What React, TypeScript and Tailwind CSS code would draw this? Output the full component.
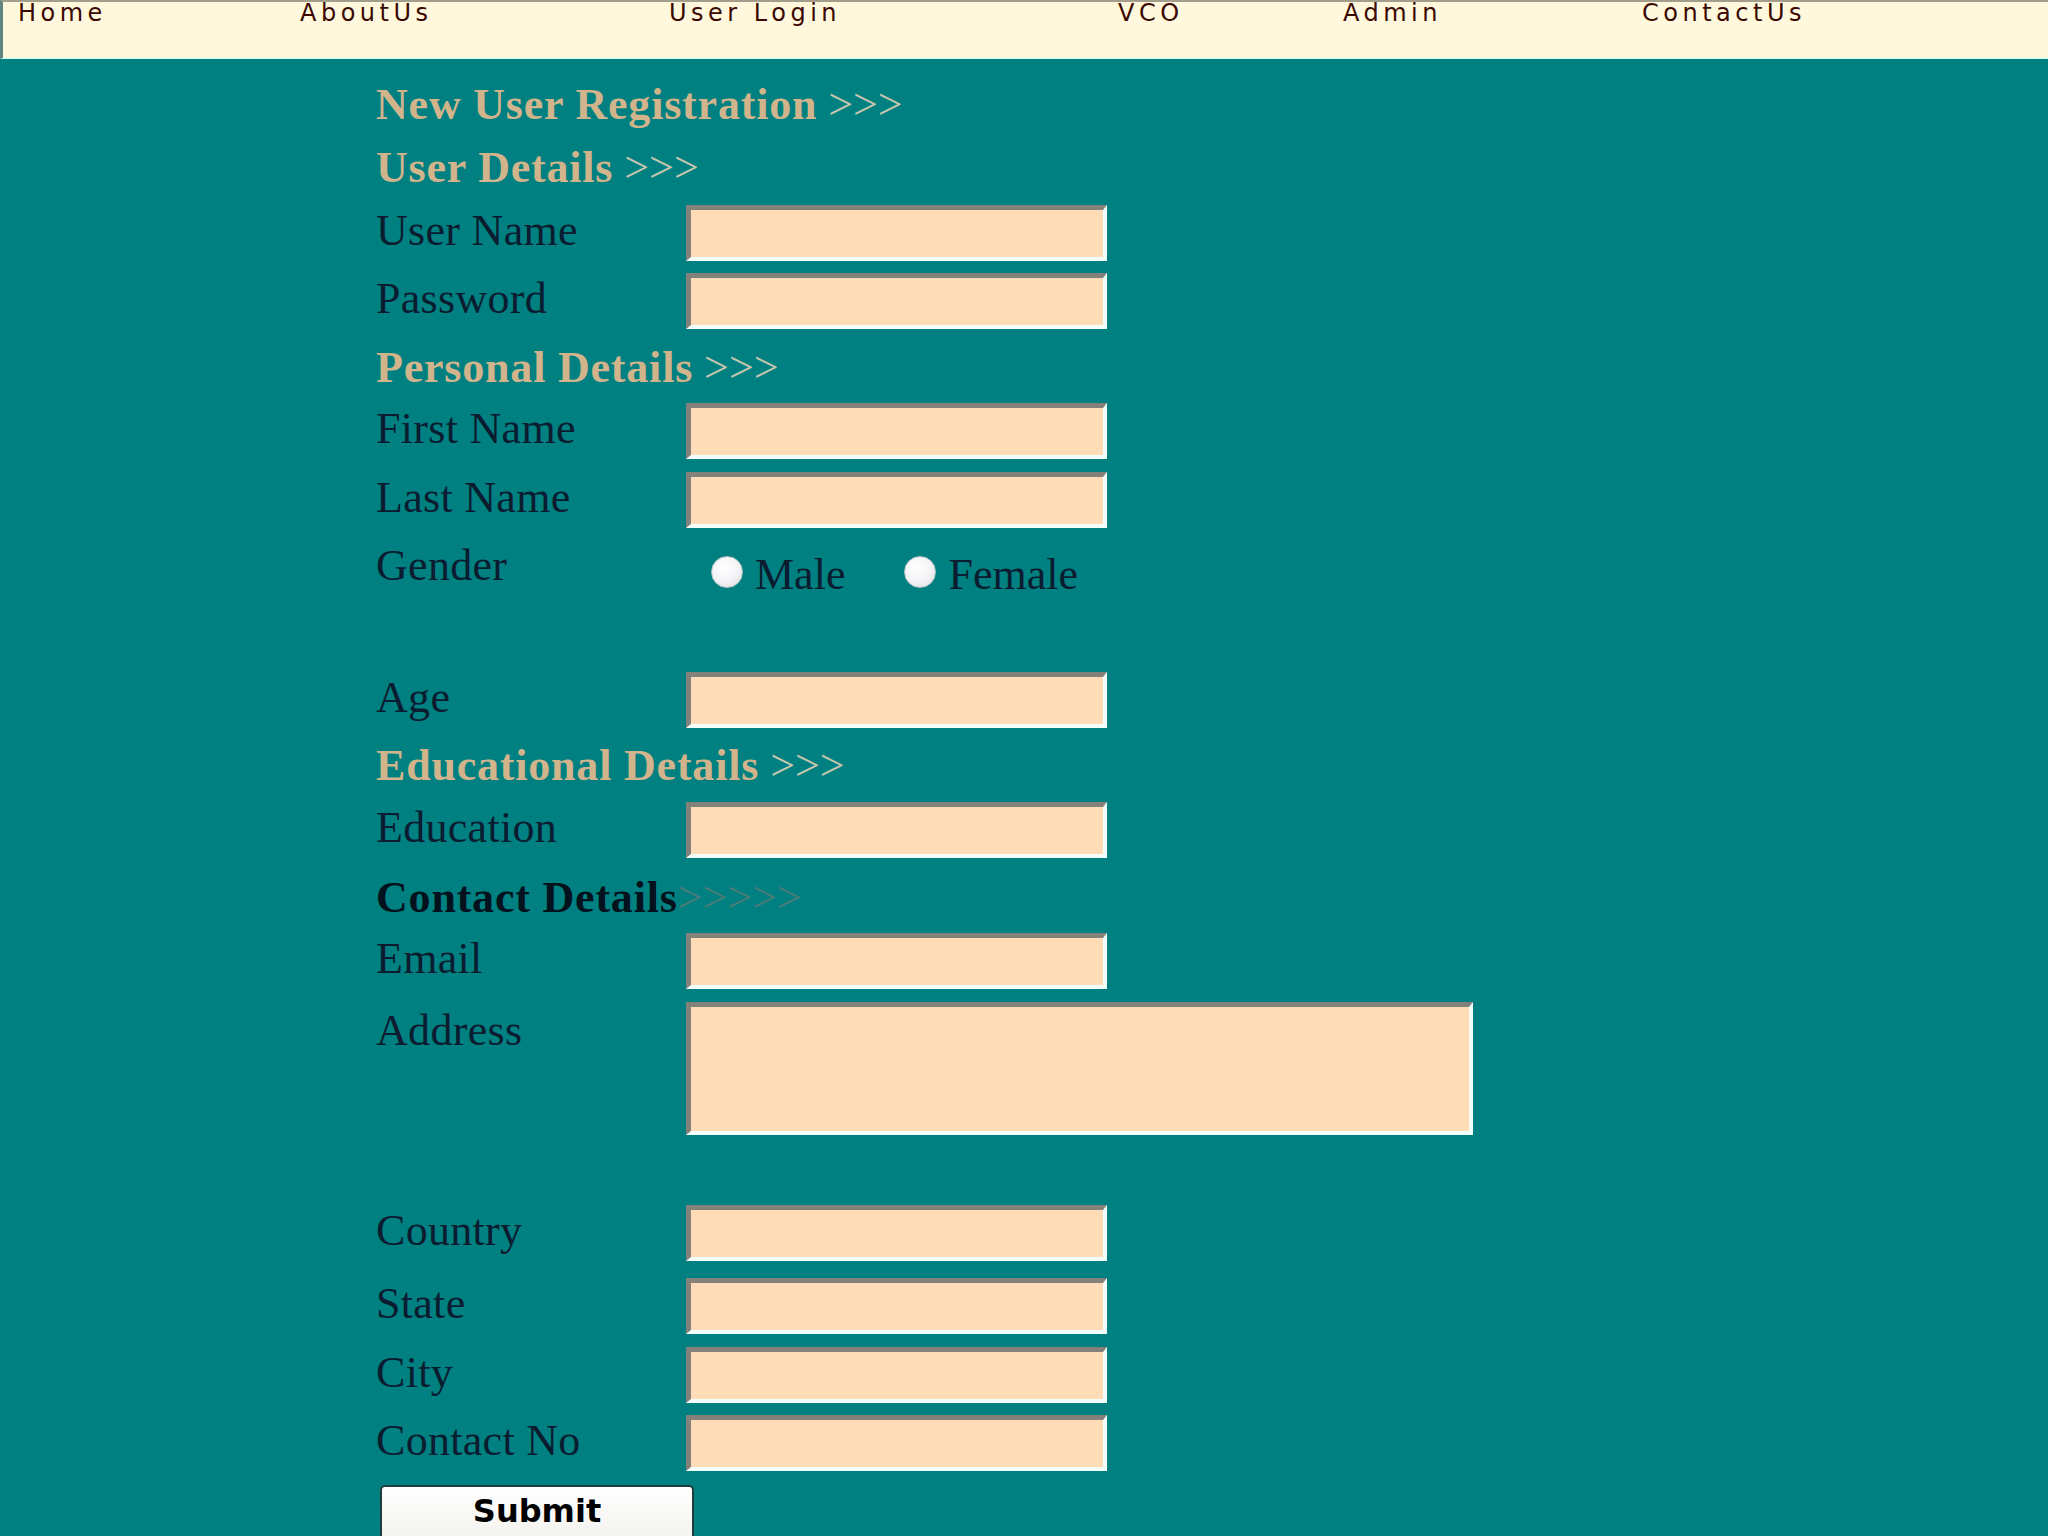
import type { ReactNode } from 'react'

const navItems = [
  { label: 'Home', width: 'w-[282px]' },
  { label: 'AboutUs', width: 'w-[369px]' },
  { label: 'User Login', width: 'w-[449px]' },
  { label: 'VCO', width: 'w-[225px]' },
  { label: 'Admin', width: 'w-[299px]' },
  { label: 'ContactUs', width: 'w-[300px]' },
]

function Label({ children }: { children: ReactNode }) {
  return <div className="w-[310px] shrink-0 pt-[3px] text-[44px] leading-[46px] tracking-[0.3px] text-[#0b1c30]">{children}</div>
}

// classic inset text box
function TextBox() {
  return (
    <input
      type="text"
      className="w-[421px] h-[56px] bg-[#fedcb8] border-t-[5px] border-l-[5px] border-b-[4px] border-r-[4px] border-t-[#84807a] border-l-[#84807a] border-b-[#f2fffb] border-r-[#f2fffb] outline-none"
    />
  )
}

function Field({ label, h, wide }: { label: string; h: string; wide?: boolean }) {
  return (
    <div className={`flex items-start ${h}`}>
      <Label>{label}</Label>
      {wide ? (
        <textarea className="w-[787px] h-[133px] -mt-[3px] bg-[#fedcb8] border-t-[5px] border-l-[5px] border-b-[4px] border-r-[4px] border-t-[#84807a] border-l-[#84807a] border-b-[#f2fffb] border-r-[#f2fffb] outline-none resize-none" />
      ) : (
        <TextBox />
      )}
    </div>
  )
}

function Heading({ title, h }: { title: string; h: string }) {
  return (
    <div className={`${h} pt-[3px] text-[44px] leading-[46px] text-[#d2b48c]`}>
      <span className="font-bold tracking-[0.8px]">{title}</span> <span className="text-[#c4c6b0]">&gt;&gt;&gt;</span>
    </div>
  )
}

function Radio({ label }: { label: string }) {
  return (
    <label className="flex items-start">
      <span className="mt-[16px] w-[32px] h-[32px] rounded-full border border-[#b9c4c4] bg-[radial-gradient(circle_at_40%_35%,#ffffff_0%,#f4f2f6_55%,#d6dadd_100%)]" />
      <span className="ml-[12px] mt-[12px] text-[44px] leading-[46px] text-[#0b1c30]">{label}</span>
    </label>
  )
}

export default function App() {
  return (
    <div className="w-[2048px] h-[1536px] overflow-hidden bg-[#008080] font-['Liberation_Serif',serif]">
      {/* Top navigation */}
      <div className="h-[59px] bg-[#fff8dc] border-t-2 border-t-[#a39e8c] border-l-[3px] border-l-[#5f8580] border-b border-b-[#c9fbf1] pl-[15px] flex">
        {navItems.map((item) => (
          <a
            key={item.label}
            href="#"
            className={`${item.width} shrink-0 font-['DejaVu_Sans',sans-serif] text-[24px] leading-[22px] tracking-[4.5px] text-[#3a0800]`}
          >
            {item.label}
          </a>
        ))}
      </div>

      {/* Registration form */}
      <div className="pl-[376px] pt-[20px] flex flex-col">
        <Heading title="New User Registration" h="h-[63px]" />
        <Heading title="User Details" h="h-[63px]" />
        <Field label="User Name" h="h-[68px]" />
        <Field label="Password" h="h-[69px]" />
        <Heading title="Personal Details" h="h-[61px]" />
        <Field label="First Name" h="h-[69px]" />
        <Field label="Last Name" h="h-[68px]" />

        <div className="flex items-start h-[132px]">
          <Label>Gender</Label>
          <div className="flex ml-[25px] gap-[59px]">
            <Radio label="Male" />
            <Radio label="Female" />
          </div>
        </div>

        <Field label="Age" h="h-[68px]" />
        <Heading title="Educational Details" h="h-[62px]" />
        <Field label="Education" h="h-[70px]" />

        <div className="h-[61px] pt-[3px] text-[44px] leading-[46px]">
          <span className="font-bold tracking-[0.8px] text-[#03121c]">Contact Details</span>
          <span className="text-[#4a7c78]">&gt;&gt;&gt;&gt;&gt;</span>
        </div>

        <Field label="Email" h="h-[72px]" />
        <Field label="Address" h="h-[200px]" wide />
        <Field label="Country" h="h-[73px]" />
        <Field label="State" h="h-[69px]" />
        <Field label="City" h="h-[68px]" />
        <Field label="Contact No" h="h-[70px]" />

        <div>
          <button className="ml-[4px] w-[314px] h-[62px] rounded-t-[5px] border-2 border-[#1f3f3f] bg-[linear-gradient(#ffffff,#f1f0ec)] font-['DejaVu_Sans',sans-serif] font-bold text-[32px] leading-[36px] text-black pb-[10px]">
            Submit
          </button>
        </div>
      </div>
    </div>
  )
}
